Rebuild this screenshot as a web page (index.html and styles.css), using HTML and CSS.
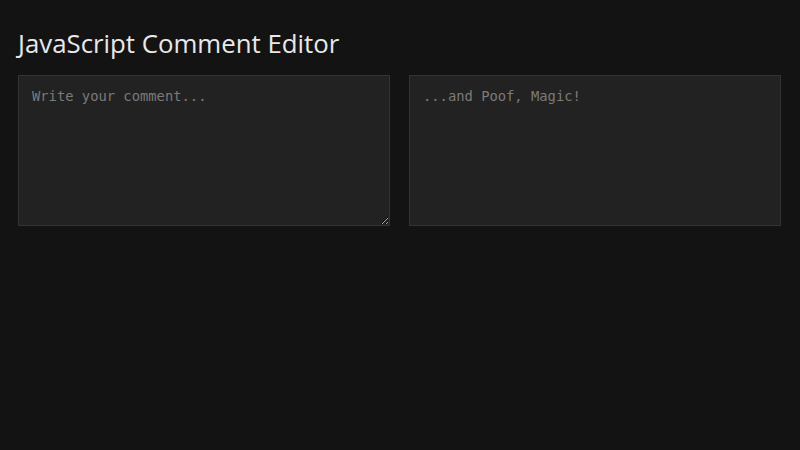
FILE: index.html
```html
<!DOCTYPE html>
<html lang="en">
<head>
<meta charset="utf-8">
<title>JavaScript Comment Editor</title>
<link rel="stylesheet" href="styles.css">
</head>
<body>
<main class="app">
  <h1 class="title">JavaScript Comment Editor</h1>
  <div class="panes">
    <textarea class="pane editor" placeholder="Write your comment..."></textarea>
    <div class="pane output"><span class="hint">...and Poof, Magic!</span></div>
  </div>
</main>
</body>
</html>
```
FILE: styles.css
```css
* { box-sizing: border-box; }
html, body { margin: 0; height: 100%; }
body {
  background: #131313;
  color: #e6e6e6;
  font-family: "Open Sans", "Noto Sans", sans-serif;
}
.app {
  padding: 28px 19px 19px 18px;
}
.title {
  margin: 0 0 17px 0;
  font-size: 25.8px;
  font-weight: 400;
  line-height: 30px;
  color: #e8e8e8;
}
.panes {
  display: grid;
  grid-template-columns: 1fr 1fr;
  gap: 19px;
}
.pane {
  height: 151px;
  background: #222222;
  border: 1px solid #333333;
  border-radius: 0;
  padding: 11px 13px;
  font-family: "DejaVu Sans Mono", monospace;
  font-size: 13.8px;
  line-height: 18px;
  color: #cfcfcf;
  margin: 0;
}
.editor {
  display: block;
  width: 100%;
  outline: none;
  resize: vertical;
}
.editor::placeholder { color: #7a7a7a; }
.hint { color: #7a7a7a; }
```
